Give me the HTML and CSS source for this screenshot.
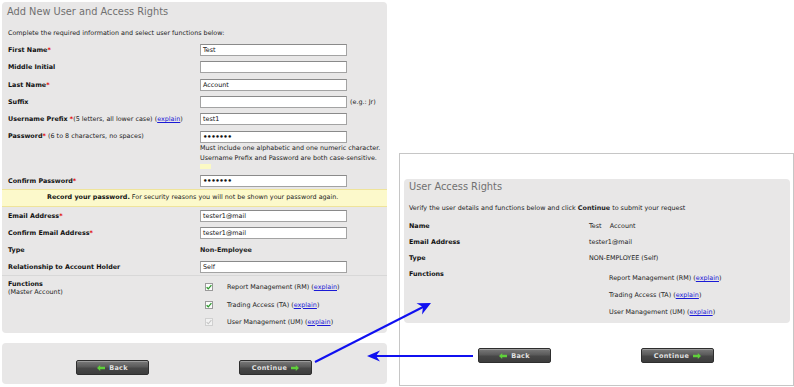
FILE: index.html
```html
<!DOCTYPE html>
<html>
<head>
<meta charset="utf-8">
<link rel="stylesheet" href="styles.css">
</head>
<body>
<div class="page">
  <div class="left">
    <div class="panel form">
      <div class="ptitle">Add New User and Access Rights</div>
      <div class="intro">Complete the required information and select user functions below:</div>

      <div class="row"><div class="lbl">First Name<span class="req">*</span></div><div class="inp">Test</div></div>
      <div class="row"><div class="lbl">Middle Initial</div><div class="inp"></div></div>
      <div class="row"><div class="lbl">Last Name<span class="req">*</span></div><div class="inp">Account</div></div>
      <div class="row"><div class="lbl">Suffix</div><div class="inp"></div><div class="aside">(e.g.: Jr)</div></div>
      <div class="row"><div class="lbl">Username Prefix <span class="req">*</span><span class="note">(5 letters, all lower case) (<a href="#">explain</a>)</span></div><div class="inp">test1</div></div>
      <div class="row tall">
        <div class="lbl">Password<span class="req">*</span> <span class="note">(6 to 8 characters, no spaces)</span></div>
        <div class="fldcol">
          <div class="inp dots">•••••••</div>
          <div class="hint first">Must include one alphabetic and one numeric character.</div>
          <div class="hint">Username Prefix and Password are both case-sensitive.</div>
          <div class="hl"></div>
        </div>
      </div>
      <div class="row"><div class="lbl">Confirm Password<span class="req">*</span></div><div class="inp dots">•••••••</div></div>

      <div class="notice"><b>Record your password.</b> For security reasons you will not be shown your password again.</div>

      <div class="row"><div class="lbl">Email Address<span class="req">*</span></div><div class="inp">tester1@mail</div></div>
      <div class="row"><div class="lbl">Confirm Email Address<span class="req">*</span></div><div class="inp">tester1@mail</div></div>
      <div class="row"><div class="lbl">Type</div><div class="val">Non-Employee</div></div>
      <div class="row"><div class="lbl">Relationship to Account Holder</div><div class="inp">Self</div></div>

      <div class="funcs">
        <div class="flbl"><b>Functions</b><br>(Master Account)</div>
        <div class="flist">
          <div class="fitem"><span class="cb"><svg viewBox="0 0 8 8" width="8" height="8"><path d="M1.6 4.2 L3.3 5.8 L6.4 2.2" fill="none" stroke="#2f9a2f" stroke-width="1.3"/></svg></span><span class="ftxt">Report Management (RM) (<a href="#">explain</a>)</span></div>
          <div class="fitem"><span class="cb"><svg viewBox="0 0 8 8" width="8" height="8"><path d="M1.6 4.2 L3.3 5.8 L6.4 2.2" fill="none" stroke="#2f9a2f" stroke-width="1.3"/></svg></span><span class="ftxt">Trading Access (TA) (<a href="#">explain</a>)</span></div>
          <div class="fitem"><span class="cb off"><svg viewBox="0 0 8 8" width="8" height="8"><path d="M1.6 4.2 L3.3 5.8 L6.4 2.2" fill="none" stroke="#c4c4c4" stroke-width="1.1"/></svg></span><span class="ftxt">User Management (UM) (<a href="#">explain</a>)</span></div>
        </div>
      </div>
    </div>

    <div class="panel actions">
      <div class="btn"><svg class="arr" viewBox="0 0 8 6" width="8" height="6"><path d="M0 3 L3.2 0 L3.2 1.8 L8 1.8 L8 4.2 L3.2 4.2 L3.2 6 Z" fill="#5fd03a"/></svg><span>Back</span></div>
      <div class="btn"><span>Continue</span><svg class="arr" viewBox="0 0 8 6" width="8" height="6"><path d="M8 3 L4.8 0 L4.8 1.8 L0 1.8 L0 4.2 L4.8 4.2 L4.8 6 Z" fill="#5fd03a"/></svg></div>
    </div>
  </div>

  <div class="right">
    <div class="panel review">
      <div class="ptitle small">User Access Rights</div>
      <div class="intro">Verify the user details and functions below and click <b>Continue</b> to submit your request</div>
      <div class="rrow"><div class="lbl">Name</div><div class="rval">Test&nbsp;&nbsp;&nbsp;&nbsp;Account</div></div>
      <div class="rrow"><div class="lbl">Email Address</div><div class="rval">tester1@mail</div></div>
      <div class="rrow"><div class="lbl">Type</div><div class="rval">NON-EMPLOYEE (Self)</div></div>
      <div class="rfuncs">
        <div class="lbl rflbl">Functions</div>
        <div class="rflist">
          <div class="ritem">Report Management (RM) (<a href="#">explain</a>)</div>
          <div class="ritem">Trading Access (TA) (<a href="#">explain</a>)</div>
          <div class="ritem">User Management (UM) (<a href="#">explain</a>)</div>
        </div>
      </div>
    </div>
    <div class="ractions">
      <div class="btn"><svg class="arr" viewBox="0 0 8 6" width="8" height="6"><path d="M0 3 L3.2 0 L3.2 1.8 L8 1.8 L8 4.2 L3.2 4.2 L3.2 6 Z" fill="#5fd03a"/></svg><span>Back</span></div>
      <div class="btn"><span>Continue</span><svg class="arr" viewBox="0 0 8 6" width="8" height="6"><path d="M8 3 L4.8 0 L4.8 1.8 L0 1.8 L0 4.2 L4.8 4.2 L4.8 6 Z" fill="#5fd03a"/></svg></div>
    </div>
  </div>

  <svg class="arrows" viewBox="0 0 794 387" width="794" height="387">
    <line x1="315" y1="362" x2="425" y2="306" stroke="#1010f0" stroke-width="2"/>
    <polygon points="431,303 416.5,303.2 423,307 422,314.5" fill="#1010f0"/>
    <line x1="473" y1="356" x2="374" y2="356" stroke="#1010f0" stroke-width="2"/>
    <polygon points="367,356 380,350.5 376,356 380,361.5" fill="#1010f0"/>
  </svg>
</div>
</body>
</html>
```

FILE: styles.css
```css
html, body {
  margin: 0;
  padding: 0;
  background: #ffffff;
}
body {
  font-family: "DejaVu Sans", Verdana, sans-serif;
  font-size: 6.4px;
  color: #222;
}
a {
  color: #1a1ad6;
  text-decoration: underline;
}
.page {
  position: relative;
  width: 794px;
  height: 387px;
  display: flex;
  overflow: hidden;
}
.left {
  width: 385px;
  margin: 2px 0 0 2px;
  display: flex;
  flex-direction: column;
}
.panel {
  background: #e8e7e7;
  border-radius: 4px;
  box-sizing: border-box;
}
.form {
  height: 331px;
  padding-left: 6px;
}
.ptitle {
  height: 19px;
  line-height: 19px;
  font-size: 9.8px;
  color: #707070;
  margin-left: -1px;
}
.intro {
  margin-top: 5px;
  height: 14px;
  line-height: 14px;
  color: #222;
  white-space: nowrap;
}
.form .intro {
  margin-bottom: 1.4px;
}
.row {
  display: grid;
  grid-template-columns: 192px 147px 1fr;
  height: 17.3px;
  align-items: center;
}
.row.tall {
  height: auto;
  align-items: start;
}
.row.tall .lbl {
  height: 17.3px;
  line-height: 17.3px;
}
.lbl {
  font-weight: bold;
  color: #111;
  white-space: nowrap;
}
.req {
  color: #e01010;
}
.note {
  font-weight: normal;
  color: #222;
}
.inp {
  height: 12px;
  box-sizing: border-box;
  background: #fff;
  border: 1px solid #a3a3a3;
  border-top-color: #8a8a8a;
  padding-left: 2px;
  line-height: 10px;
  color: #111;
  white-space: nowrap;
  overflow: hidden;
}
.fldcol .inp {
  margin-top: 2.65px;
}
.inp.dots {
  font-size: 7px;
  font-weight: bold;
  letter-spacing: -0.4px;
}
.aside {
  padding-left: 3px;
  color: #222;
  white-space: nowrap;
}
.hint {
  line-height: 9.7px;
  white-space: nowrap;
  color: #222;
}
.hint.first {
  margin-top: 1.3px;
}
.hl {
  width: 11px;
  height: 5px;
  background: #fbf9c4;
  margin-top: 1.2px;
  margin-bottom: 2.7px;
}
.val {
  font-weight: bold;
  color: #222;
}
.notice {
  margin-left: -6px;
  height: 17.5px;
  box-sizing: border-box;
  background: #fcf9cb;
  border-top: 1px solid #efe49a;
  border-bottom: 1px solid #efe49a;
  line-height: 15.5px;
  padding-left: 45px;
  color: #222;
  white-space: nowrap;
}
.notice b {
  color: #111;
}
.funcs {
  margin-left: -6px;
  padding-left: 6px;
  border-top: 1px solid #d8d8d8;
  display: grid;
  grid-template-columns: 192px 1fr;
  margin-top: -1px;
}
.flbl {
  padding-top: 4px;
  line-height: 8.3px;
  color: #222;
}
.flbl b {
  color: #111;
}
.flist {
  padding-top: 2.5px;
}
.fitem {
  height: 17.3px;
  display: flex;
  align-items: center;
  white-space: nowrap;
}
.cb {
  width: 8px;
  height: 8px;
  box-sizing: border-box;
  border: 1px solid #9a9a9a;
  background: #fbfbfb;
  margin-left: 5px;
  display: flex;
  align-items: center;
  justify-content: center;
  overflow: hidden;
  flex: none;
}
.cb svg {
  flex: none;
}
.cb.off {
  border-color: #d0d0d0;
  background: #f2f2f2;
}
.ftxt {
  margin-left: 14px;
  color: #222;
}
.actions {
  margin-top: 10px;
  height: 41px;
  padding: 17px 0 0 74px;
  display: flex;
  gap: 90px;
}
.btn {
  width: 73px;
  height: 15px;
  box-sizing: border-box;
  border: 1px solid #2e2e2e;
  border-radius: 2px;
  background: linear-gradient(#7a7a7a, #5a5a5a 45%, #474747 55%, #3d3d3d);
  box-shadow: inset 0 1px 0 #9a9a9a;
  display: flex;
  align-items: center;
  justify-content: center;
  gap: 4px;
  color: #e2e2e2;
  font-weight: bold;
  font-size: 6.5px;
  letter-spacing: 0.3px;
  flex: none;
}
.arr {
  flex: none;
}
.right {
  margin: 153px 0 0 12px;
  width: 395px;
  height: 233px;
  box-sizing: border-box;
  border: 1px solid #c6c6c6;
  display: flex;
  flex-direction: column;
}
.review {
  margin: 25px 3px 0 4px;
  height: 144px;
  padding-left: 5px;
}
.ptitle.small {
  height: 16px;
  line-height: 16px;
  margin-top: 0;
  margin-left: 0;
}
.review .intro {
  margin-top: 7px;
  height: 13px;
  line-height: 13px;
  margin-bottom: 3px;
}
.rrow {
  display: grid;
  grid-template-columns: 180px 1fr;
  height: 16.1px;
  align-items: center;
}
.rval {
  color: #222;
  white-space: nowrap;
}
.rfuncs {
  display: grid;
  grid-template-columns: 180px 1fr;
}
.rflbl {
  padding-top: 4px;
  line-height: 8px;
}
.rflist {
  padding-top: 3.6px;
  padding-left: 20px;
}
.ritem {
  height: 17.2px;
  line-height: 17.2px;
  color: #222;
  white-space: nowrap;
}
.ractions {
  display: flex;
  gap: 90px;
  padding-left: 78px;
  margin-top: 25px;
}
.arrows {
  position: absolute;
  left: 0;
  top: 0;
  pointer-events: none;
}
```
